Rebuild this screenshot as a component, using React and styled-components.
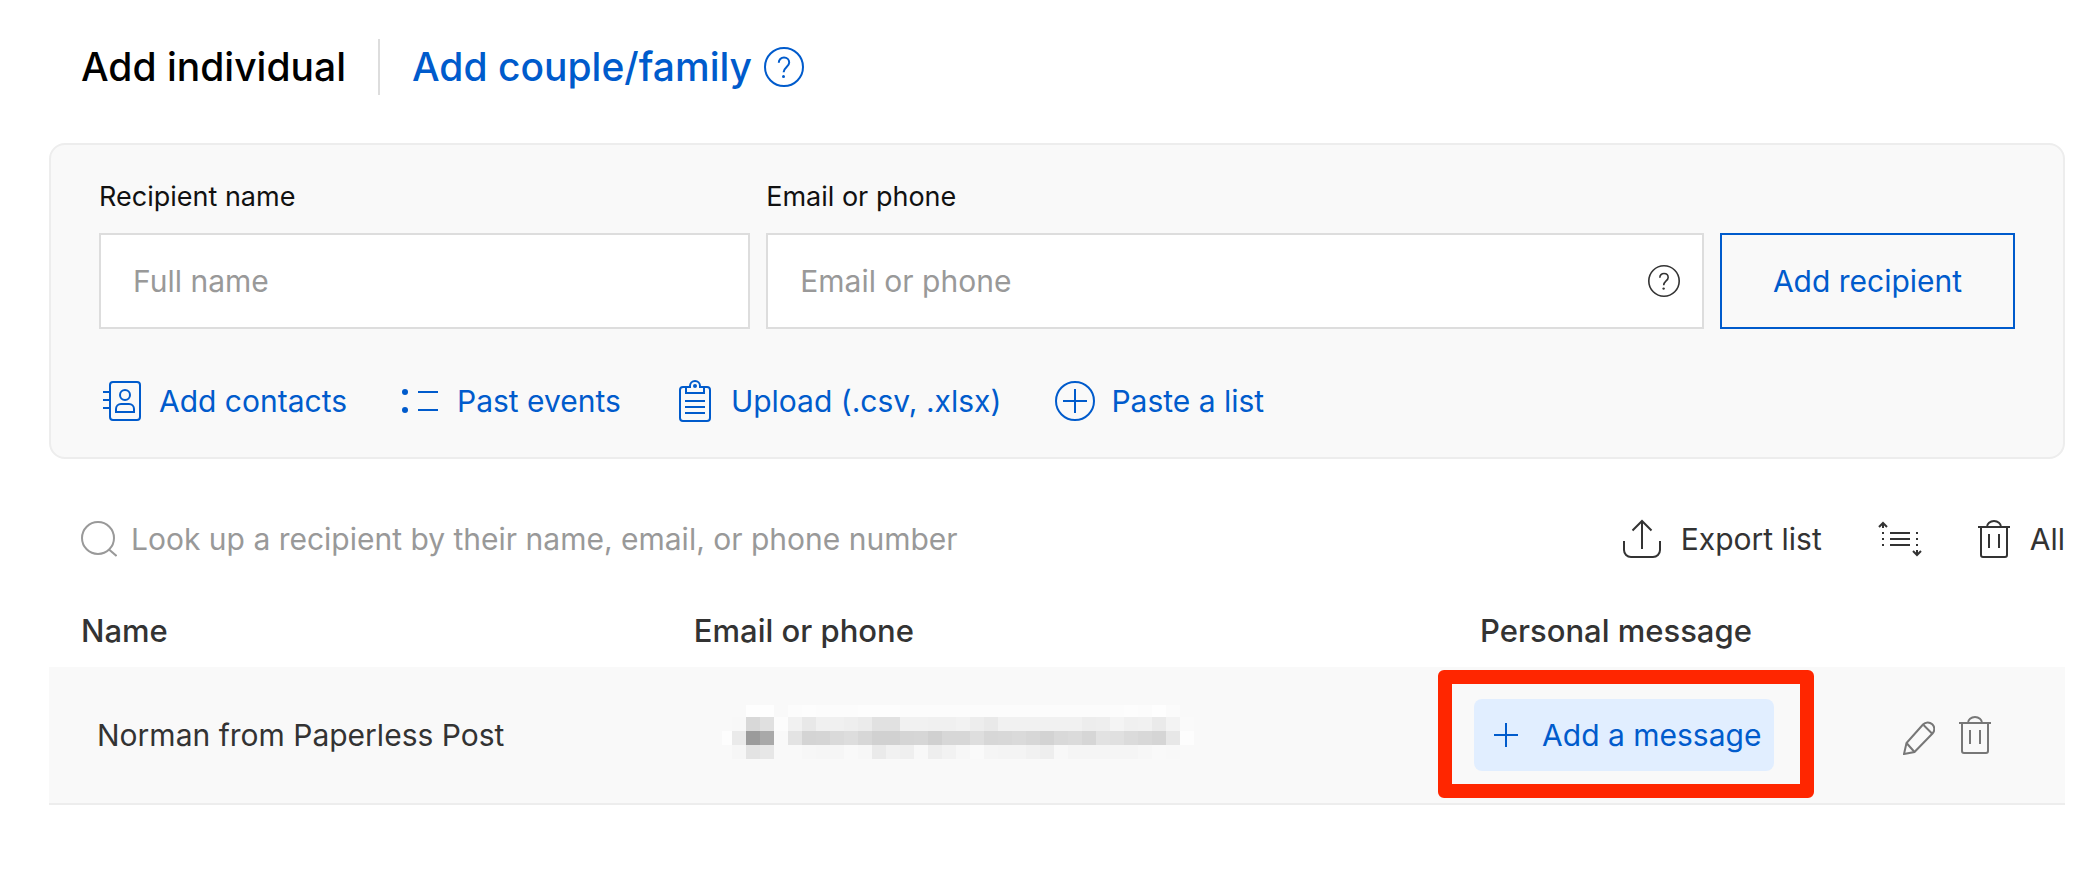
import { styled, createGlobalStyle } from "styled-components";

const recipients = [{ id: 1, name: "Norman from Paperless Post" }];

// grey levels of the masked address, one byte per cell
const maskRows = [
  {
    y: 0,
    height: 12,
    cells:
      "f9fefef9fcfdfcfcfcfdfdfdfcfcfcfcfcfcfcfcfcfcfcfcfcfcfcfcfdfcfefbf9",
  },
  {
    y: 12,
    height: 14,
    cells:
      "f8d8e0fcf1e8f0f0eeebe1e1f1f1f0f0f2ede9f1f1f1f1f1f1edeef4f0f1eaf3fa",
  },
  {
    y: 26,
    height: 14,
    cells:
      "ea9ba9f9e3d4d5daddd7d1d1d5d6d0d7d7ded7d8dad7d3d9dbd6e2e0dbd8d5e7fd",
  },
  {
    y: 40,
    height: 14,
    cells:
      "f6e3e7f9f9f7f6f6f9f7eaf1eff8eef2f7faf5f4f4f1eef8f5f5f5f5f5f7f9f8f9",
  },
];

export default function App() {
  return (
    <>
      <GlobalStyle />
      <Page>
        <TabBar>
          <TabButton $active>Add individual</TabButton>
          <Divider />
          <TabButton>Add couple/family</TabButton>
          <HelpButton aria-label="About couples and families">
            <HelpIcon size={40} />
          </HelpButton>
        </TabBar>

        <Panel>
          <Form onSubmit={(event) => event.preventDefault()}>
            <Field>
              <Label htmlFor="recipient-name">Recipient name</Label>
              <TextBox id="recipient-name" placeholder="Full name" />
            </Field>
            <Field>
              <Label htmlFor="recipient-email">Email or phone</Label>
              <BoxWrapper>
                <TextBox id="recipient-email" placeholder="Email or phone" />
                <BoxHelp type="button" aria-label="About email or phone">
                  <HelpIcon size={32} />
                </BoxHelp>
              </BoxWrapper>
            </Field>
            <SubmitButton type="submit">Add recipient</SubmitButton>
          </Form>
          <SourceList>
            <SourceLink href="#contacts">
              <ContactsIcon />
              Add contacts
            </SourceLink>
            <SourceLink href="#past-events">
              <ListIcon />
              Past events
            </SourceLink>
            <SourceLink href="#upload">
              <ClipboardIcon />
              Upload (.csv, .xlsx)
            </SourceLink>
            <SourceLink href="#paste">
              <CirclePlusIcon />
              Paste a list
            </SourceLink>
          </SourceList>
        </Panel>

        <Toolbar>
          <SearchLabel>
            <SearchIcon />
            <SearchBox
              type="text"
              aria-label="Search recipients"
              placeholder="Look up a recipient by their name, email, or phone number"
            />
          </SearchLabel>
          <ToolbarActions>
            <ToolButton>
              <ExportIcon />
              Export list
            </ToolButton>
            <ToolButton aria-label="Sort">
              <SortIcon />
            </ToolButton>
            <ToolButton>
              <TrashIcon />
              All
            </ToolButton>
          </ToolbarActions>
        </Toolbar>

        <Table>
          <colgroup>
            <Column $width="30.4%" />
            <Column $width="39%" />
            <Column $width="21%" />
            <Column />
          </colgroup>
          <thead>
            <tr>
              <HeaderCell>Name</HeaderCell>
              <HeaderCell>Email or phone</HeaderCell>
              <HeaderCell>Personal message</HeaderCell>
              <HeaderCell aria-label="Actions" />
            </tr>
          </thead>
          <tbody>
            {recipients.map((recipient) => (
              <Row key={recipient.id}>
                <Cell $inset={48}>{recipient.name}</Cell>
                <Cell $inset={60}>
                  <MaskedAddress />
                </Cell>
                <Cell $inset={26}>
                  <Highlight>
                    <MessageButton>
                      <PlusIcon />
                      Add a message
                    </MessageButton>
                  </Highlight>
                </Cell>
                <Cell $inset={32}>
                  <RowActions>
                    <RowButton aria-label="Edit recipient">
                      <PencilIcon />
                    </RowButton>
                    <RowButton aria-label="Delete recipient">
                      <TrashIcon />
                    </RowButton>
                  </RowActions>
                </Cell>
              </Row>
            ))}
          </tbody>
        </Table>
      </Page>
    </>
  );
}

function HelpIcon({ size }) {
  return (
    <Icon width={size} height={size} viewBox="0 0 40 40">
      <circle cx="20" cy="20" r="19" />
      <path d="M14.8 15.8c0-3 2.2-5.2 5.2-5.2s5.2 2.1 5.2 4.9c0 4.3-5.6 4.6-5.6 9.8" />
      <circle cx="19.5" cy="29.5" r="1.5" fill="currentColor" stroke="none" />
    </Icon>
  );
}

function ContactsIcon() {
  return (
    <Icon width="40" height="40" viewBox="0 0 40 40">
      <rect x="7" y="1" width="30" height="38" rx="3" />
      <path d="M0 11h7M0 19h7M0 27h7" />
      <circle cx="22" cy="14" r="5" />
      <path d="M13 31v-3a5 5 0 0 1 5-5h8a5 5 0 0 1 5 5v3z" />
    </Icon>
  );
}

function ListIcon() {
  return (
    <Icon width="40" height="40" viewBox="0 0 40 40">
      <circle cx="4" cy="11" r="3" fill="currentColor" stroke="none" />
      <circle cx="4" cy="29" r="3" fill="currentColor" stroke="none" />
      <path d="M17 11h20M17 29h20" />
    </Icon>
  );
}

function ClipboardIcon() {
  return (
    <Icon width="40" height="42" viewBox="0 0 40 42">
      <path d="M10 7H8a3 3 0 0 0-3 3v28a3 3 0 0 0 3 3h24a3 3 0 0 0 3-3V10a3 3 0 0 0-3-3h-2" />
      <path d="M11 7v6h18V7h-4V6a5 5 0 0 0-10 0v1z" />
      <circle cx="20" cy="6" r="2" fill="currentColor" stroke="none" />
      <path d="M10 21h20M10 27h20M10 33h20" />
    </Icon>
  );
}

function CirclePlusIcon() {
  return (
    <Icon width="40" height="40" viewBox="0 0 40 40">
      <circle cx="20" cy="20" r="19" />
      <path d="M20 8v24M8 20h24" />
    </Icon>
  );
}

function SearchIcon() {
  return (
    <Icon width="36" height="36" viewBox="0 0 36 36">
      <circle cx="17" cy="17" r="16" />
      <path d="M28 28.5l7.5 6.5" />
    </Icon>
  );
}

function ExportIcon() {
  return (
    <Icon width="38" height="40" viewBox="0 0 38 40">
      <path d="M1 22v9a7 7 0 0 0 7 7h22a7 7 0 0 0 7-7v-9" />
      <path d="M19 30V2M9.500 11.500L19 2l9.500 9.500" />
    </Icon>
  );
}

function SortIcon() {
  return (
    <Icon width="44" height="36" viewBox="0 0 44 36">
      <path d="M1 6l4-4 4 4M5 2v5M35 30l4 4 4-4M39 34v-5" />
      <path d="M12 12h20M12 18h20M12 24h20" />
      <path d="M5 11v14M39 11v14" strokeDasharray="2 4" />
    </Icon>
  );
}

function TrashIcon() {
  return (
    <Icon width="32" height="38" viewBox="0 0 32 38">
      <path d="M0 7h32M3 7v28a2 2 0 0 0 2 2h22a2 2 0 0 0 2-2V7" />
      <path d="M9 7a7 6 0 0 1 14 0M11 14v14M21 14v14" />
    </Icon>
  );
}

function PencilIcon() {
  return (
    <Icon width="32" height="40" viewBox="0 -5 32 40">
      <path d="M1 34l2.500-11L20 4.500a6.500 6.500 0 0 1 9.500 9L11.500 32z" />
      <path d="M3.500 23L11.500 32M20.500 5l9 9" />
    </Icon>
  );
}

function PlusIcon() {
  return (
    <Icon width="24" height="24" viewBox="0 0 24 24">
      <path d="M12 0v24M0 12h24" />
    </Icon>
  );
}

function MaskedAddress() {
  return (
    <Mask
      width="472"
      height="60"
      viewBox="0 0 472 60"
      role="img"
      aria-label="Masked address"
    >
      <rect x="0" y="26" width="10" height="14" fill="#fdfdfd" />
      {maskRows.map((row) =>
        row.cells.match(/../g).map((grey, index) => (
          <rect
            key={`${row.y}-${index}`}
            x={10 + index * 14}
            y={row.y}
            width="14"
            height={row.height}
            fill={`#${grey}${grey}${grey}`}
          />
        ))
      )}
    </Mask>
  );
}

const GlobalStyle = createGlobalStyle`
  * {
    box-sizing: border-box;
  }

  body {
    margin: 0;
    background: #fff;
    color: #333;
    font: 400 30px/40px Inter, "Liberation Sans", sans-serif;
  }

  button,
  input {
    margin: 0;
    padding: 0;
    border: none;
    border-radius: 0;
    background: none;
    color: inherit;
    font: inherit;
  }

  button {
    cursor: pointer;
  }
`;

const Page = styled.main`
  padding: 39px 17px 0 49px;
`;

const Icon = styled.svg`
  display: block;
  flex: none;
  fill: none;
  stroke: currentColor;
  stroke-width: 2;
`;

// Tabs

const TabBar = styled.div`
  display: flex;
  align-items: center;
  height: 56px;
  padding-left: 32px;
`;

const TabButton = styled.button`
  color: ${({ $active }) => ($active ? "#000" : "#005bcc")};
  font-size: 39px;
  font-weight: 500;
  white-space: nowrap;
`;

const Divider = styled.span`
  width: 2px;
  height: 56px;
  margin: 0 32px;
  background: #ddd;
`;

const HelpButton = styled.button`
  margin-left: 12px;
  color: #005bcc;
`;

// Panel with the form

const Panel = styled.section`
  margin-top: 48px;
  padding: 36px 48px;
  border: 2px solid #ededed;
  border-radius: 16px;
  background: #f9f9f9;
`;

const Form = styled.form`
  display: grid;
  grid-template-columns: 25fr 36fr auto;
  align-items: end;
  gap: 16px;
`;

const Field = styled.div`
  display: flex;
  flex-direction: column;
  gap: 20px;
`;

const Label = styled.label`
  color: #111;
  font-size: 27px;
  line-height: 32px;
`;

const BoxWrapper = styled.div`
  position: relative;
`;

const TextBox = styled.input`
  display: block;
  width: 100%;
  height: 96px;
  padding: 0 32px;
  border: 2px solid #ddd;
  background: #fff;

  &::placeholder {
    color: #999;
  }
`;

const BoxHelp = styled.button`
  position: absolute;
  top: 32px;
  right: 24px;
  color: #333;
`;

const SubmitButton = styled.button`
  min-width: 295px;
  height: 96px;
  padding: 0 46px;
  border: 2px solid #005bcc;
  color: #005bcc;
  white-space: nowrap;
`;

const SourceList = styled.nav`
  display: flex;
  flex-wrap: wrap;
  gap: 54px;
  margin-top: 52px;
  padding-left: 4px;
`;

const SourceLink = styled.a`
  display: flex;
  align-items: center;
  gap: 16px;
  height: 40px;
  color: #005bcc;
  text-decoration: none;
  white-space: nowrap;
`;

// Toolbar over the table

const Toolbar = styled.div`
  display: flex;
  align-items: center;
  justify-content: space-between;
  gap: 48px;
  height: 40px;
  margin-top: 60px;
  padding-left: 32px;
`;

const SearchLabel = styled.label`
  display: flex;
  flex: 1;
  align-items: center;
  gap: 14px;
  color: #999;
`;

const SearchBox = styled.input`
  flex: 1;
  min-width: 0;
  color: #333;

  &::placeholder {
    color: #999;
  }
`;

const ToolbarActions = styled.div`
  display: flex;
  align-items: center;
  gap: 56px;
`;

const ToolButton = styled.button`
  display: flex;
  align-items: center;
  gap: 20px;
  white-space: nowrap;
`;

// Recipients table

const Table = styled.table`
  width: 100%;
  margin-top: 36px;
  border-collapse: collapse;
  table-layout: fixed;
`;

const Column = styled.col`
  width: ${({ $width }) => $width || "auto"};
`;

const HeaderCell = styled.th`
  height: 72px;
  padding: 0 0 0 32px;
  font-size: 31px;
  font-weight: 500;
  text-align: left;
`;

const Row = styled.tr`
  border-bottom: 2px solid #ededed;
  background: #f9f9f9;
`;

const Cell = styled.td`
  height: 137px;
  padding: 0 0 0 ${({ $inset }) => $inset}px;
`;

const Mask = styled.svg`
  display: block;
  shape-rendering: crispEdges;
`;

const Highlight = styled.div`
  position: relative;
  width: fit-content;

  &::after {
    content: "";
    position: absolute;
    inset: -29px -40px -27px -36px;
    border: 14px solid #ff2600;
    border-radius: 6px;
    pointer-events: none;
  }
`;

const MessageButton = styled.button`
  display: flex;
  align-items: center;
  gap: 24px;
  min-width: 300px;
  height: 72px;
  padding: 0 8px 0 20px;
  border-radius: 8px;
  background: #e1eeff;
  color: #005bcc;
  white-space: nowrap;
`;

const RowActions = styled.div`
  display: flex;
  align-items: center;
  gap: 24px;
`;

const RowButton = styled.button`
  color: #777;
`;
